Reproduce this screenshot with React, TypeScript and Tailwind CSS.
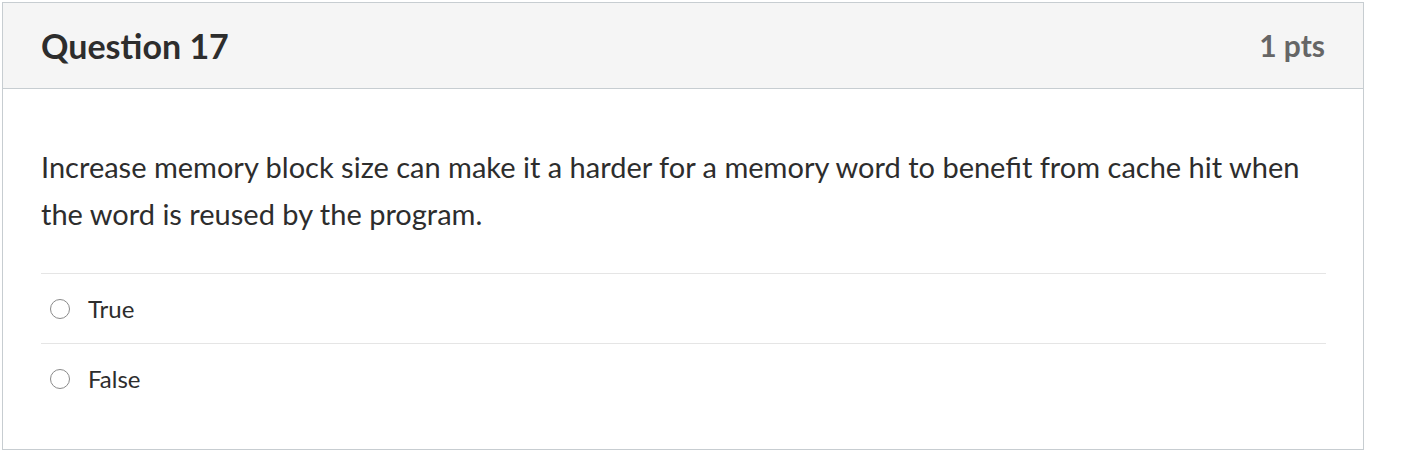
export default function App() {
  const answers = ["True", "False"];
  return (
    <div className="bg-white min-h-screen p-[2px]" style={{ fontFamily: "Lato, 'Noto Sans', sans-serif" }}>
      <div className="w-[1362px] border border-[#c7cdd1] text-[#2d3b45]">
        <div className="h-[86px] bg-[#f5f5f5] border-b border-[#c7cdd1] flex items-center justify-between px-[38px]">
          <h2 className="text-[34px] font-bold text-[#2d2d2d]">Question 17</h2>
          <span className="text-[30px] font-bold text-[#666666]">1 pts</span>
        </div>
        <div className="px-[38px] pt-[54px] pb-[36px]">
          <p className="text-[29px] leading-[47px] text-[#2d2d2d]">
            Increase memory block size can make it a harder for a memory word to benefit from cache hit when the word
            is reused by the program.
          </p>
          <div className="mt-[36px]">
            {answers.map((a) => (
              <div key={a} className="h-[70px] border-t border-[#e5e5e5] flex items-center w-[1285px]">
                <span className="w-[20px] h-[20px] rounded-full border-[1.5px] border-[#8a8a8a] ml-[9px] mr-[18px]" />
                <span className="text-[24px] text-[#2d2d2d]">{a}</span>
              </div>
            ))}
          </div>
        </div>
      </div>
    </div>
  );
}
